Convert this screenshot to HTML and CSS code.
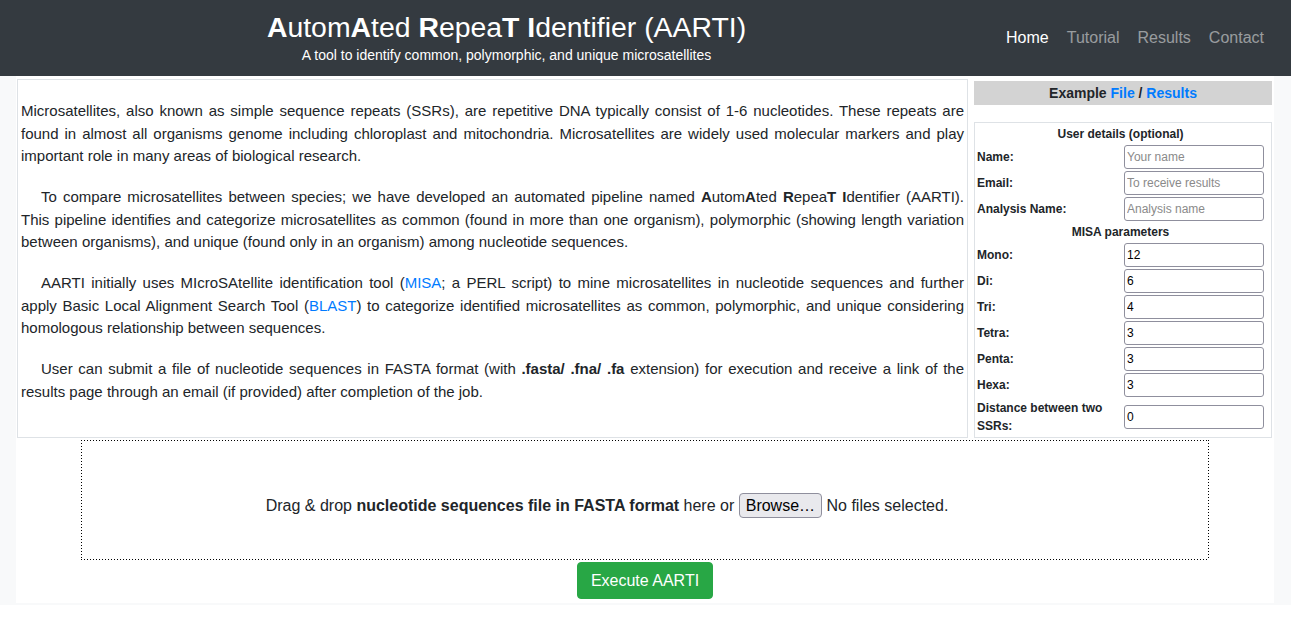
FILE: index.html
```html
<!DOCTYPE html>
<html lang="en">
<head>
<meta charset="utf-8">
<title>AARTI</title>
<link rel="stylesheet" href="styles.css">
</head>
<body>
<header class="topbar">
  <div class="brand">
    <h1 class="title"><b>A</b>utom<b>A</b>ted <b>R</b>epea<b>T</b> <b>I</b>dentifier (AARTI)</h1>
    <p class="subtitle">A tool to identify common, polymorphic, and unique microsatellites</p>
  </div>
  <nav class="nav">
    <a class="nav-link active" href="#">Home</a>
    <a class="nav-link" href="#">Tutorial</a>
    <a class="nav-link" href="#">Results</a>
    <a class="nav-link" href="#">Contact</a>
  </nav>
</header>
<main class="outer">
  <div class="inner">
    <div class="row">
      <section class="intro">
        <p>Microsatellites, also known as simple sequence repeats (SSRs), are repetitive DNA typically consist of 1-6 nucleotides. These repeats are found in almost all organisms genome including chloroplast and mitochondria. Microsatellites are widely used molecular markers and play important role in many areas of biological research.</p>
        <p class="ind">To compare microsatellites between species; we have developed an automated pipeline named <b>A</b>utom<b>A</b>ted <b>R</b>epea<b>T</b> <b>I</b>dentifier (AARTI). This pipeline identifies and categorize microsatellites as common (found in more than one organism), polymorphic (showing length variation between organisms), and unique (found only in an organism) among nucleotide sequences.</p>
        <p class="ind">AARTI initially uses MIcroSAtellite identification tool (<a href="#">MISA</a>; a PERL script) to mine microsatellites in nucleotide sequences and further apply Basic Local Alignment Search Tool (<a href="#">BLAST</a>) to categorize identified microsatellites as common, polymorphic, and unique considering homologous relationship between sequences.</p>
        <p class="ind">User can submit a file of nucleotide sequences in FASTA format (with <b>.fasta/ .fna/ .fa</b> extension) for execution and receive a link of the results page through an email (if provided) after completion of the job.</p>
      </section>
      <aside class="side">
        <div class="example">Example <a href="#">File</a> / <a href="#">Results</a></div>
        <div class="form-box">
          <div class="ftitle">User details (optional)</div>
          <label class="lbl">Name:</label><input class="inp" type="text" placeholder="Your name">
          <label class="lbl">Email:</label><input class="inp" type="text" placeholder="To receive results">
          <label class="lbl">Analysis Name:</label><input class="inp" type="text" placeholder="Analysis name">
          <div class="ftitle">MISA parameters</div>
          <label class="lbl">Mono:</label><input class="inp" type="text" value="12">
          <label class="lbl">Di:</label><input class="inp" type="text" value="6">
          <label class="lbl">Tri:</label><input class="inp" type="text" value="4">
          <label class="lbl">Tetra:</label><input class="inp" type="text" value="3">
          <label class="lbl">Penta:</label><input class="inp" type="text" value="3">
          <label class="lbl">Hexa:</label><input class="inp" type="text" value="3">
          <label class="lbl two">Distance between two SSRs:</label><input class="inp" type="text" value="0">
        </div>
      </aside>
    </div>
    <div class="drop">
      <span>Drag &amp; drop <b>nucleotide sequences file in FASTA format</b> here or <span class="browse">Browse…</span> No files selected.</span>
    </div>
    <div class="actions">
      <button class="exec" type="button">Execute AARTI</button>
    </div>
  </div>
</main>
</body>
</html>
```
FILE: styles.css
```css
* { box-sizing: border-box; }
body {
  margin: 0;
  font-family: "Liberation Sans", Arial, sans-serif;
  color: #212529;
  background: #fff;
}
a { color: #007bff; text-decoration: none; }

.topbar {
  background: #343a40;
  height: 76px;
  display: flex;
  align-items: flex-start;
}
.brand {
  width: 982px;
  margin-left: 16px;
  text-align: center;
  color: #fff;
  padding-top: 10px;
}
.title {
  margin: 0;
  font-size: 28.4px;
  line-height: 35px;
  font-weight: normal;
}
.title b { font-weight: bold; }
.subtitle {
  margin: 0;
  font-size: 14px;
  line-height: 21px;
}
.nav {
  margin-left: auto;
  padding-right: 18px;
  display: flex;
  padding-top: 26px;
}
.nav-link {
  font-size: 16px;
  line-height: 24px;
  padding: 0 9px;
  color: rgba(255,255,255,.5);
}
.nav-link.active { color: #fff; }

.outer {
  background: #f8f9fa;
  padding: 0 17px 2px 16px;
}
.inner {
  background: #fff;
  padding: 3px 0 4px;
}
.row {
  display: grid;
  grid-template-columns: 951px 298px;
  column-gap: 6px;
  padding-left: 1px;
}
.intro {
  border: 1px solid #dee2e6;
  padding: 20px 3px 0 3px;
  font-size: 15px;
  line-height: 22.5px;
}
.intro p {
  margin: 0 0 18.5px;
  text-align: justify;
}
.intro p.ind { text-indent: 20px; }

.side { padding-top: 2px; }
.example {
  background: #d3d3d3;
  height: 24px;
  line-height: 24px;
  text-align: center;
  font-weight: bold;
  font-size: 14px;
  margin-bottom: 17px;
}
.form-box {
  border: 1px solid #dee2e6;
  padding: 2px 7px 2px 2px;
  display: grid;
  grid-template-columns: 1fr 140px;
  row-gap: 2px;
  align-items: center;
  font-size: 12px;
}
.ftitle {
  grid-column: 1 / -1;
  text-align: center;
  font-weight: bold;
  line-height: 18px;
}
.lbl {
  font-weight: bold;
  line-height: 18px;
}
.inp {
  width: 140px;
  height: 24px;
  border: 1px solid #8f8f9d;
  border-radius: 3px;
  padding: 0 2px;
  font: 12px "Liberation Sans", Arial, sans-serif;
  color: #000;
  background: #fff;
}
.inp::placeholder { color: #8a8a8a; }

.drop {
  margin: 2px auto 0;
  width: 1128px;
  height: 120px;
  background-image:
    repeating-linear-gradient(to right, #000 0 1px, transparent 1px 3px),
    repeating-linear-gradient(to right, #000 0 1px, transparent 1px 3px),
    repeating-linear-gradient(to bottom, #000 0 1px, transparent 1px 3px),
    repeating-linear-gradient(to bottom, #000 0 1px, transparent 1px 3px);
  background-size: 100% 1px, 100% 1px, 1px 100%, 1px 100%;
  background-position: 0 0, 0 100%, 0 0, 100% 0;
  background-repeat: no-repeat;
  display: flex;
  align-items: center;
  justify-content: center;
  font-size: 16px;
  padding: 10px 76px 0 0;
}
.browse {
  display: inline-block;
  background: #e9e9ed;
  border: 1px solid #8f8f9d;
  border-radius: 4px;
  padding: 0 6px;
  line-height: 23px;
  color: #000;
}
.actions {
  display: flex;
  justify-content: center;
  padding-top: 2px;
}
.exec {
  background: #28a745;
  border: 1px solid #28a745;
  color: #fff;
  font: 16px "Liberation Sans", Arial, sans-serif;
  height: 37px;
  padding: 0 13px;
  border-radius: 4px;
}
```
